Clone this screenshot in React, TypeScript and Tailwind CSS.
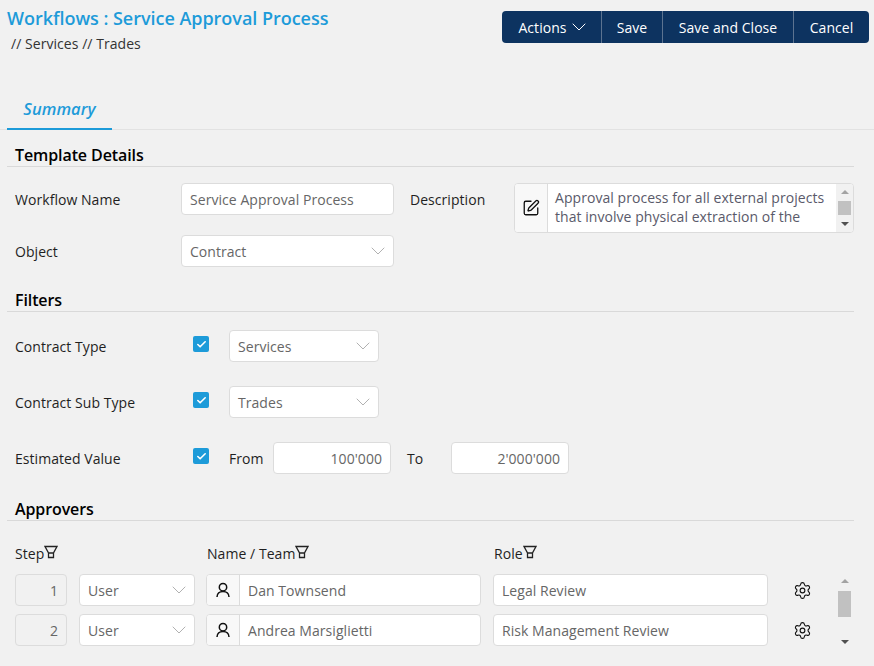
import { ChevronDown, Settings, SquarePen, Check } from "lucide-react"
import type { ReactNode } from "react"

function Select({ value, className }: { value: string; className: string }) {
  return (
    <div className={`flex h-8 items-center justify-between rounded-[4px] border border-[#dcdcdc] bg-white pl-2 pr-[3px] text-[#666] ${className}`}>
      <span>{value}</span>
      <ChevronDown size={24} strokeWidth={0.9} className="text-[#a8a8a8]" />
    </div>
  )
}

function Heading({ children }: { children: ReactNode }) {
  return (
    <div className="ml-[7px] mr-5 border-b border-[#d9d9d9] pl-2 text-[16px] leading-[22px] font-semibold tracking-[-0.1px] text-black">
      {children}
    </div>
  )
}

function Tick() {
  return (
    <div className="flex h-4 w-4 items-center justify-center rounded-[2px] bg-[#1d9bd9]">
      <Check size={11} strokeWidth={3.5} className="text-white" />
    </div>
  )
}

function FilterRow({ label, children }: { label: string; children: ReactNode }) {
  return (
    <div className="flex h-8 items-center pl-[15px]">
      <span className="w-[178px] text-[#1f1f1f]">{label}</span>
      <div className="mb-1">
        <Tick />
      </div>
      <div className="ml-5 flex items-center">{children}</div>
    </div>
  )
}

function FunnelIcon() {
  return (
    <svg width="14" height="14" viewBox="0 0 14 14" fill="none" stroke="#222" strokeWidth="1.3" className="-mt-0.5">
      <path d="M1 1.5h12L9.5 8v4.5h-5V8zM4.5 8h5" />
    </svg>
  )
}

function UserIcon() {
  return (
    <svg width="16" height="16" viewBox="0 0 16 16" fill="none" stroke="#111" strokeWidth="1.5">
      <circle cx="8" cy="5.2" r="3.7" />
      <path d="M2 15c0-3.5 2.6-5.6 6-5.6s6 2.1 6 5.6" />
    </svg>
  )
}

function ColHead({ label, className }: { label: string; className: string }) {
  return (
    <div className={`flex items-center text-[#1f1f1f] ${className}`}>
      {label}
      <FunnelIcon />
    </div>
  )
}

function ApproverRow({ step, name, role }: { step: string; name: string; role: string }) {
  return (
    <div className="flex h-8 items-center">
      <div className="flex h-8 w-[52px] items-center justify-end rounded-[4px] border border-[#dcdcdc] pr-2 text-[#666]">{step}</div>
      <Select value="User" className="ml-3 w-[116px]" />
      <div className="ml-[11px] flex h-8 w-[275px] items-stretch overflow-hidden rounded-[4px] border border-[#dcdcdc] bg-white text-[#666]">
        <div className="flex w-[33px] items-center justify-center border-r border-[#dcdcdc] bg-[#f8f8f8]">
          <UserIcon />
        </div>
        <span className="self-center pl-2">{name}</span>
      </div>
      <div className="ml-3 flex h-8 w-[275px] items-center rounded-[4px] border border-[#dcdcdc] bg-white pl-2 text-[#666]">{role}</div>
      <Settings size={19} strokeWidth={1.4} className="ml-[25px] text-[#111]" />
    </div>
  )
}

export default function App() {
  return (
    <div className="h-[666px] w-[874px] overflow-hidden bg-[#f1f1f1] text-[14px] font-['Open_Sans','Noto_Sans',sans-serif] tracking-[0.05px]">
      {/* header */}
      <div className="flex items-start justify-between pt-[6px] pr-[5px] pl-[7px]">
        <div>
          <div className="text-[18px] leading-[24px] font-semibold tracking-[-0.03px] text-[#1d9bd9]">Workflows : Service Approval Process</div>
          <div className="mt-1 pl-1 leading-[20px] text-[#333]">// Services // Trades</div>
        </div>
        <div className="mt-[5px] flex h-8 items-center rounded-[4px] bg-[#0d3360] text-white">
          <div className="flex h-full w-[100px] items-center justify-center border-r border-[#5c7390]">
            Actions <ChevronDown size={24} strokeWidth={1} className="-mr-1.5" />
          </div>
          <div className="flex h-full w-[61px] items-center justify-center border-r border-[#5c7390]">Save</div>
          <div className="flex h-full w-[131px] items-center justify-center border-r border-[#5c7390]">Save and Close</div>
          <div className="flex h-full w-[75px] items-center justify-center">Cancel</div>
        </div>
      </div>

      {/* tabs */}
      <div className="mt-[42px] border-b border-[#e2e2e2] pl-[7px]">
        <div className="-mb-px h-[34px] w-[105px] border-b-2 border-[#1d9bd9] pt-[2px] text-center text-[16.5px] leading-[22px] font-semibold italic text-[#1d9bd9]">
          Summary
        </div>
      </div>

      {/* template details */}
      <div className="mt-[14px]">
        <Heading>Template Details</Heading>
        <div className="mt-4 flex items-start pl-[15px]">
          <span className="mt-[6px] w-[166px] text-[#1f1f1f]">Workflow Name</span>
          <div className="flex h-8 w-[213px] items-center rounded-[4px] border border-[#dcdcdc] bg-white pl-2 text-[#666]">Service Approval Process</div>
          <span className="mt-[6px] ml-4 w-[104px] text-[#1f1f1f]">Description</span>
          <div className="flex h-[50px] w-[340px] items-stretch overflow-hidden rounded-[4px] border border-[#dcdcdc] bg-white">
            <div className="flex w-[33px] items-center justify-center border-r border-[#dcdcdc] bg-[#f8f8f8]">
              <SquarePen size={18} strokeWidth={1.75} className="text-[#111]" />
            </div>
            <div className="flex-1 pl-[7px] pt-[4px] leading-[19px] text-[#5a5a6a]">
              Approval process for all external projects
              <br />
              that involve physical extraction of the
            </div>
            <div className="flex w-[17px] flex-col items-center justify-between bg-[#f1f1f1] py-1.5">
              <div className="h-0 w-0 border-x-[4px] border-b-[4px] border-x-transparent border-b-[#a3a3a3]" />
              <div className="h-[14px] w-[13px] bg-[#c1c1c1]" />
              <div className="h-0 w-0 border-x-[4px] border-t-[4px] border-x-transparent border-t-[#505050]" />
            </div>
          </div>
        </div>
        <div className="mt-[2px] flex items-center pl-[15px]">
          <span className="w-[166px] text-[#1f1f1f]">Object</span>
          <Select value="Contract" className="w-[213px]" />
        </div>
      </div>

      {/* filters */}
      <div className="mt-[22px]">
        <Heading>Filters</Heading>
        <div className="mt-[18px] flex flex-col gap-6">
          <FilterRow label="Contract Type">
            <Select value="Services" className="w-[150px]" />
          </FilterRow>
          <FilterRow label="Contract Sub Type">
            <Select value="Trades" className="w-[150px]" />
          </FilterRow>
          <FilterRow label="Estimated Value">
            <span className="w-11 text-[#1f1f1f]">From</span>
            <div className="flex h-8 w-[118px] items-center justify-end rounded-[4px] border border-[#dcdcdc] bg-white pr-2 text-[#666]">100'000</div>
            <span className="ml-4 w-11 text-[#1f1f1f]">To</span>
            <div className="flex h-8 w-[118px] items-center justify-end rounded-[4px] border border-[#dcdcdc] bg-white pr-2 text-[#666]">2'000'000</div>
          </FilterRow>
        </div>
      </div>

      {/* approvers */}
      <div className="mt-6">
        <Heading>Approvers</Heading>
        <div className="mt-[22px] flex h-5 items-center pl-[15px]">
          <ColHead label="Step" className="w-[192px]" />
          <ColHead label="Name / Team" className="w-[287px]" />
          <ColHead label="Role" className="w-[100px]" />
        </div>
        <div className="mt-[11px] flex pl-[15px]">
          <div className="flex flex-col gap-2">
            <ApproverRow step="1" name="Dan Townsend" role="Legal Review" />
            <ApproverRow step="2" name="Andrea Marsiglietti" role="Risk Management Review" />
          </div>
          <div className="mt-[1px] ml-[26px] flex h-[73px] w-[13px] flex-col items-center justify-between py-1">
            <div className="h-0 w-0 border-x-[4px] border-b-[4px] border-x-transparent border-b-[#a3a3a3]" />
            <div className="-mt-4 h-[26px] w-[13px] bg-[#c1c1c1]" />
            <div className="h-0 w-0 border-x-[4px] border-t-[4px] border-x-transparent border-t-[#505050]" />
          </div>
        </div>
      </div>
    </div>
  )
}
